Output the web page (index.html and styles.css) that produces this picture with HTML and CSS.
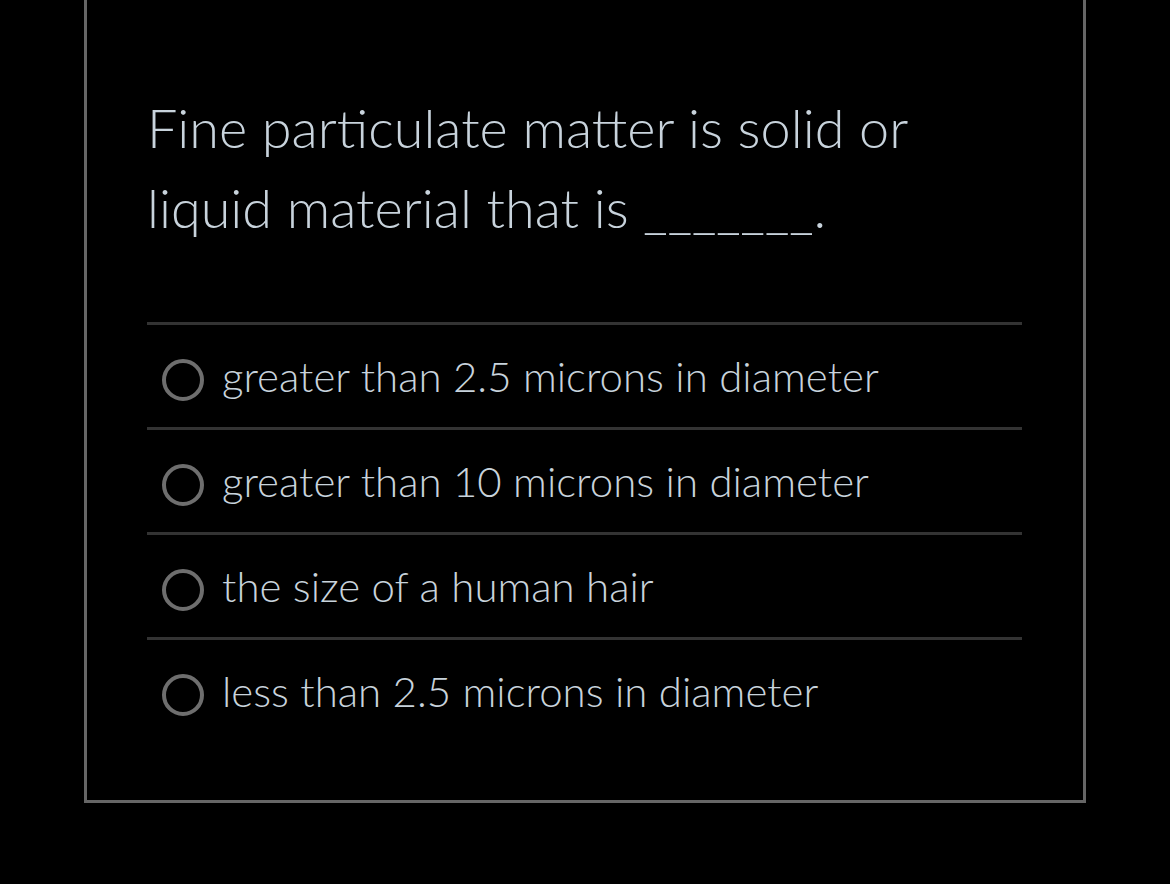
FILE: index.html
```html
<!DOCTYPE html>
<html>
<head>
<meta charset="utf-8">
<link rel="stylesheet" href="styles.css">
</head>
<body>
<div class="card">
  <div class="question">Fine particulate matter is solid or liquid material that is _______.</div>
  <ul class="options">
    <li class="option"><span class="radio"></span><span class="label">greater than 2.5 microns in diameter</span></li>
    <li class="option"><span class="radio"></span><span class="label">greater than 10 microns in diameter</span></li>
    <li class="option"><span class="radio"></span><span class="label">the size of a human hair</span></li>
    <li class="option"><span class="radio"></span><span class="label">less than 2.5 microns in diameter</span></li>
  </ul>
</div>
</body>
</html>
```
FILE: styles.css
```css
html, body {
  margin: 0;
  padding: 0;
  background: #000;
}
body {
  font-family: "Lato Light", Lato, "Open Sans", sans-serif;
  font-weight: 300;
  color: #c8d3dc;
}
.card {
  box-sizing: border-box;
  margin-left: 84px;
  width: 1002px;
  border: 3px solid #666;
  border-top: none;
  padding: 88px 61px 58px 60px;
}
.question {
  font-size: 54px;
  line-height: 80px;
  width: 820px;
  margin-bottom: 74px;
}
.options {
  list-style: none;
  margin: 0;
  padding: 0;
}
.option {
  display: flex;
  align-items: center;
  gap: 18px;
  height: 102px;
  border-top: 3px solid #333;
  padding-left: 15px;
}
.radio {
  width: 34px;
  height: 34px;
  margin-top: 8px;
  border: 4px solid #6e6e6e;
  border-radius: 50%;
  flex: none;
}
.label {
  font-size: 42px;
}
```
